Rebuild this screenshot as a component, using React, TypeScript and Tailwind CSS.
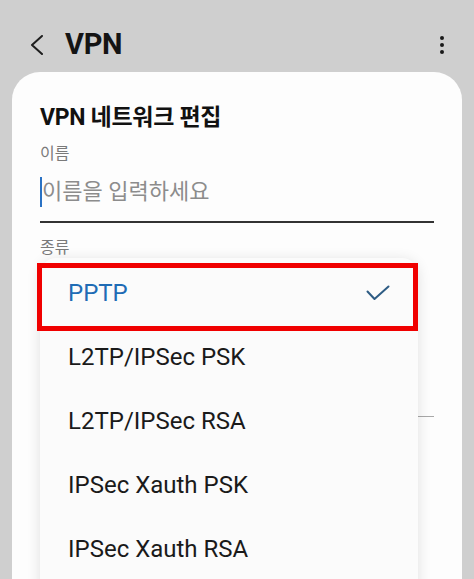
const types = ['PPTP', 'L2TP/IPSec PSK', 'L2TP/IPSec RSA', 'IPSec Xauth PSK', 'IPSec Xauth RSA']

export default function App() {
  return (
    <div
      className="h-[579px] w-[474px] overflow-hidden bg-[#cfcfcf] flex flex-col"
      style={{ fontFamily: 'Roboto, "Noto Sans CJK KR", sans-serif' }}
    >
      {/* Top bar */}
      <div className="h-[72px] shrink-0 flex items-center pl-[30px] pr-[30px] pt-[18px]">
        <svg width="14" height="20" viewBox="0 0 14 20" fill="none">
          <path d="M12 1 L2 10 L12 19" stroke="#1e1e1e" strokeWidth="2" strokeLinecap="round" strokeLinejoin="round" />
        </svg>
        <span className="ml-[21px] text-[29px] font-bold text-[#141414] tracking-[-0.3px]">VPN</span>
        <div className="ml-auto flex flex-col gap-[3px]">
          <span className="block h-[4px] w-[4px] rounded-full bg-[#1a1a1a]" />
          <span className="block h-[4px] w-[4px] rounded-full bg-[#1a1a1a]" />
          <span className="block h-[4px] w-[4px] rounded-full bg-[#1a1a1a]" />
        </div>
      </div>

      {/* Card */}
      <div className="relative mx-[12px] flex-1 rounded-t-[28px] bg-[#fdfdfd] px-[28px] pt-[31px]">
        <h1 className="text-[23px] font-bold text-[#111] leading-[30px] tracking-[-0.3px]">VPN 네트워크 편집</h1>

        <div className="mt-[10px] text-[16px] leading-[22px] text-[#7a7a7a]">이름</div>
        <div className="mt-[10px] flex items-center h-[34px]">
          <span className="block h-[30px] w-[2px] bg-[#2a72c4]" />
          <span className="text-[22px] text-[#8c8c8c] leading-[30px]">이름을 입력하세요</span>
        </div>
        <div className="mt-[12px] h-[2px] bg-[#333]" />

        <div className="mt-[14px] text-[16px] leading-[22px] text-[#7a7a7a]">종류</div>

        {/* field hidden behind the menu */}
        <div className="mt-[157px] h-[1px] bg-[#a8a8a8]" />

        {/* Dropdown menu */}
        <div className="absolute left-[28px] top-[186px] w-[378px] h-[400px] rounded-t-[16px] bg-[#fbfbfb] shadow-[0_2px_14px_rgba(0,0,0,0.12)] pt-[3px]">
          {types.map((t, i) => (
            <div key={t} className="h-[64px] flex items-center pl-[28px] pr-[28px]">
              <span className={`text-[24px] leading-[30px] ${i === 0 ? 'text-[#1f6cb5]' : 'text-[#1a1a1a]'}`}>{t}</span>
              {i === 0 && (
                <svg className="ml-auto" width="24" height="16" viewBox="0 0 24 16" fill="none">
                  <path d="M1.5 6.5 L8.5 14 L22.5 1.5" stroke="#2e5c84" strokeWidth="2" strokeLinecap="round" strokeLinejoin="round" />
                </svg>
              )}
            </div>
          ))}
        </div>

        {/* Highlight box */}
        <div className="absolute left-[25px] top-[191px] w-[381px] h-[68px] border-[5px] border-[#f00000]" />
      </div>
    </div>
  )
}
